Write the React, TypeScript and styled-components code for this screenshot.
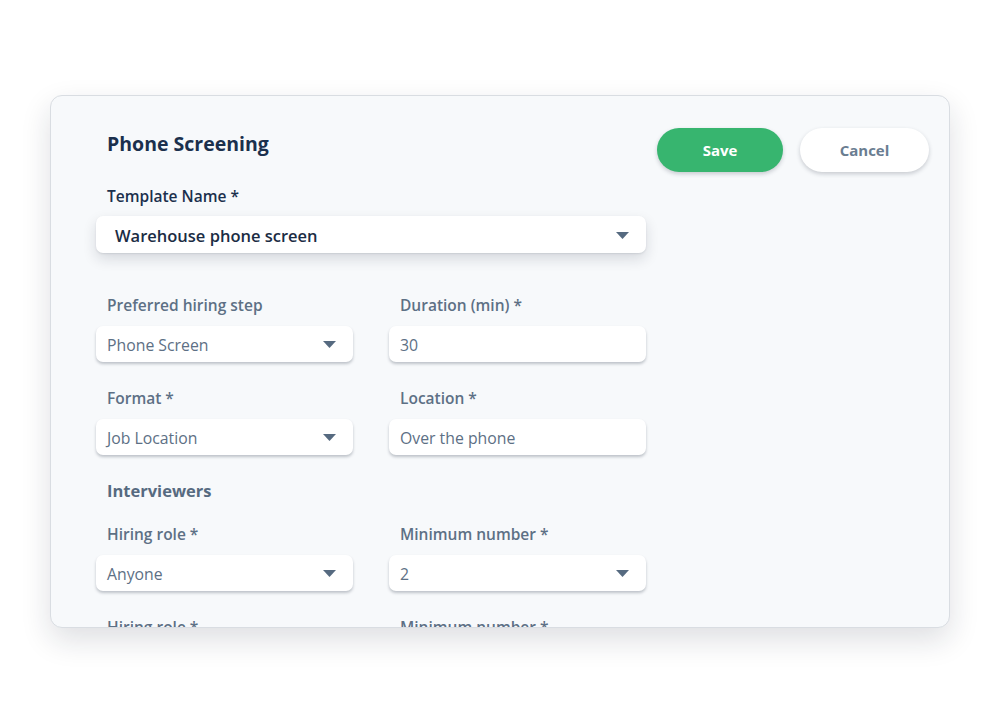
import React from 'react';
import styled, { createGlobalStyle } from 'styled-components';

const GlobalStyle = createGlobalStyle`
  html, body {
    margin: 0;
    padding: 0;
    background: #ffffff;
    font-family: "Open Sans", Lato, sans-serif;
  }
`;

const Page = styled.div`
  width: 1000px;
  height: 722px;
  box-sizing: border-box;
  padding: 95px 50px 0 50px;
`;

const Card = styled.div`
  height: 533px;
  box-sizing: border-box;
  background: #f7f9fb;
  border: 1px solid #d9dde2;
  border-radius: 12px;
  box-shadow: 0 12px 30px rgba(20, 30, 50, 0.14);
  overflow: hidden;
  display: flex;
`;

const FormColumn = styled.div`
  width: 550px;
  margin-left: 45px;
  padding-top: 36px;
  display: flex;
  flex-direction: column;
`;

const Actions = styled.div`
  margin-left: auto;
  padding: 32px 20px 0 0;
  display: flex;
  gap: 17px;
  align-items: flex-start;
`;

const Button = styled.button<{ $primary?: boolean }>`
  width: ${(p) => (p.$primary ? '126px' : '129px')};
  height: 44px;
  border: none;
  border-radius: 22px;
  font-family: inherit;
  font-size: 15px;
  font-weight: 700;
  cursor: pointer;
  background: ${(p) => (p.$primary ? '#37b56f' : '#ffffff')};
  color: ${(p) => (p.$primary ? '#ffffff' : '#6a7d91')};
  box-shadow: 0 2px 4px rgba(30, 40, 60, 0.22);
`;

const Title = styled.h1`
  margin: 0 0 30px 11px;
  font-size: 19.5px;
  line-height: 24px;
  font-weight: 700;
  color: #1b304d;
`;

const SectionTitle = styled.h2`
  margin: 25px 0 22px 11px;
  font-size: 16.5px;
  line-height: 22px;
  font-weight: 700;
  color: #566a80;
`;

const Field = styled.div`
  display: flex;
  flex-direction: column;
`;

const Label = styled.label<{ $strong?: boolean }>`
  margin: 0 0 ${(p) => (p.$strong ? '10px' : '11px')} 11px;
  font-size: 15.5px;
  line-height: 20px;
  font-weight: 600;
  color: ${(p) => (p.$strong ? '#1b304d' : '#5d7085')};
`;

const Row = styled.div`
  display: grid;
  grid-template-columns: 257px 257px;
  column-gap: 36px;
  margin-top: 26px;
`;

const Control = styled.div<{ $big?: boolean }>`
  height: ${(p) => (p.$big ? '37px' : '36px')};
  box-sizing: border-box;
  background: #ffffff;
  border-radius: 7px;
  display: flex;
  align-items: center;
  padding: 1px 17px 0 ${(p) => (p.$big ? '19px' : '11px')};
  box-shadow: ${(p) =>
    p.$big
      ? '0 6px 14px rgba(20, 30, 50, 0.14), 0 1px 2px rgba(20, 30, 50, 0.1)'
      : '0 2px 3px rgba(20, 30, 50, 0.25)'};
  font-size: ${(p) => (p.$big ? '16.5px' : '15.8px')};
  font-weight: ${(p) => (p.$big ? 600 : 400)};
  color: ${(p) => (p.$big ? '#1b2c44' : '#5d7085')};
`;

const Value = styled.span`
  flex: 1;
`;

const Caret = () => (
  <svg width="13" height="7" viewBox="0 0 13 7">
    <path d="M0 0h13L6.5 7z" fill="#566a80" />
  </svg>
);

const Select = ({ value, big }: { value: string; big?: boolean }) => (
  <Control $big={big}>
    <Value>{value}</Value>
    <Caret />
  </Control>
);

const Input = ({ value }: { value: string }) => (
  <Control>
    <Value>{value}</Value>
  </Control>
);

export default function App() {
  return (
    <>
      <GlobalStyle />
      <Page>
        <Card>
          <FormColumn>
            <Title>Phone Screening</Title>
            <Field>
              <Label $strong>Template Name *</Label>
              <Select value="Warehouse phone screen" big />
            </Field>
            <Row style={{ marginTop: 42 }}>
              <Field>
                <Label>Preferred hiring step</Label>
                <Select value="Phone Screen" />
              </Field>
              <Field>
                <Label>Duration (min) *</Label>
                <Input value="30" />
              </Field>
            </Row>
            <Row>
              <Field>
                <Label>Format *</Label>
                <Select value="Job Location" />
              </Field>
              <Field>
                <Label>Location *</Label>
                <Input value="Over the phone" />
              </Field>
            </Row>
            <SectionTitle>Interviewers</SectionTitle>
            <Row style={{ marginTop: 0 }}>
              <Field>
                <Label>Hiring role *</Label>
                <Select value="Anyone" />
              </Field>
              <Field>
                <Label>Minimum number *</Label>
                <Select value="2" />
              </Field>
            </Row>
            <Row>
              <Field>
                <Label>Hiring role *</Label>
                <Select value="Anyone" />
              </Field>
              <Field>
                <Label>Minimum number *</Label>
                <Select value="2" />
              </Field>
            </Row>
          </FormColumn>
          <Actions>
            <Button $primary>Save</Button>
            <Button>Cancel</Button>
          </Actions>
        </Card>
      </Page>
    </>
  );
}
